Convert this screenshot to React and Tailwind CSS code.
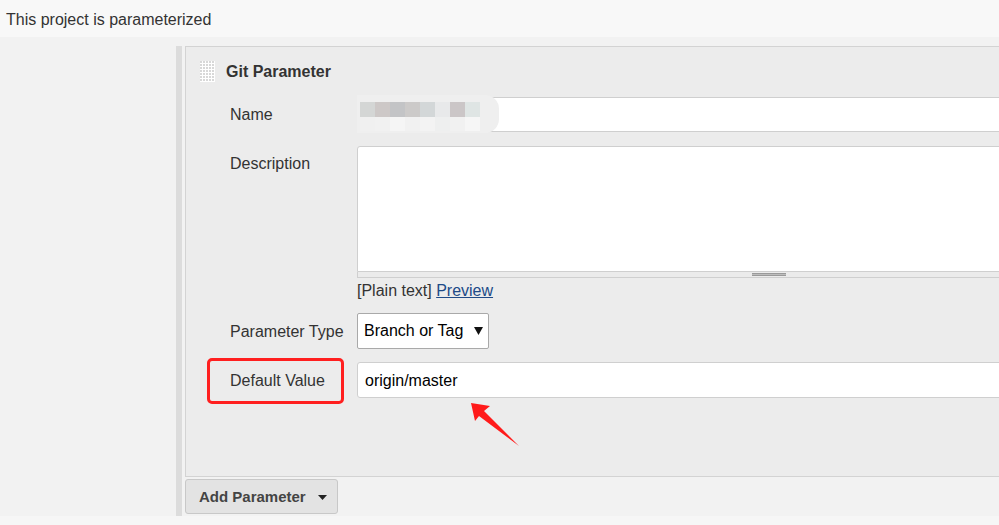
import React from 'react';

const topCells = ['#d4d6d5', '#cdc8c7', '#c3c4c6', '#cccac9', '#d3d7d8', '#e8e9ea', '#cbc6c7', '#dfe5e4'];
const bottomCells = ['#f0f0f0', '#f1f1f1', '#f5f5f5', '#f1f1f1', '#f3f3f3', '#eeefef', '#f1f1f1', '#f6f6f6'];

const Grip = () => (
    <svg width="15" height="21" viewBox="0 0 15 21">
        <defs>
            <pattern id="dots" width="3" height="3" patternUnits="userSpaceOnUse">
                <rect width="3" height="3" fill="#ffffff" />
                <rect width="2" height="2" fill="#d8d8d8" />
            </pattern>
        </defs>
        <rect width="15" height="21" fill="url(#dots)" />
    </svg>
);

const App = () => {
    return (
        <div className="relative min-h-screen overflow-hidden bg-[#f2f2f2] font-['Liberation_Sans',Arial,sans-serif] text-[16px] text-[#333]">
            <div className="h-[37px] bg-[#f8f8f8] pl-[6px] pt-[3px] flex items-center">This project is parameterized</div>

            <div className="pt-[9px] pl-[176px]">
                <div className="border-l-[6px] border-[#dcdcdc] pl-[3px] pb-[2px]">
                    <div className="h-[431px] w-[1100px] border border-r-0 border-[#d3d3d3] bg-[#ececec] pl-[14px] pt-[14px]">
                        {/* header */}
                        <div className="flex items-center h-[21px]">
                            <Grip />
                            <span className="ml-[11px] font-bold">Git Parameter</span>
                        </div>

                        <div className="pl-[30px] mt-[15px]">
                            {/* Name */}
                            <div className="flex items-center h-[35px]">
                                <div className="w-[127px]">Name</div>
                                <div className="relative h-[35px] w-[824px] rounded-[3px] border border-[#cfcfcf] bg-white">
                                    <div className="absolute -left-px -top-[3px] h-[38px] w-[142px] rounded-r-[14px] bg-[#efefef] pt-[7px] pl-[3px]">
                                        <div className="flex">
                                            {topCells.map((c, i) => (
                                                <div key={i} className="h-[15px] w-[15px]" style={{ backgroundColor: c }} />
                                            ))}
                                        </div>
                                        <div className="flex">
                                            {bottomCells.map((c, i) => (
                                                <div key={i} className="h-[14px] w-[15px]" style={{ backgroundColor: c }} />
                                            ))}
                                        </div>
                                    </div>
                                </div>
                            </div>

                            {/* Description */}
                            <div className="flex mt-[14px]">
                                <div className="w-[127px] pt-[6px]">Description</div>
                                <div>
                                    <div className="h-[126px] w-[824px] rounded-t-[3px] border border-[#cfcfcf] bg-white" />
                                    <div className="h-[6px] w-[824px] border border-t-0 border-[#cfcfcf] bg-[#ebebeb] flex justify-center">
                                        <div className="mt-px h-[3px] w-[34px] border-y border-[#9a9a9a] bg-[#bdbdbd]" />
                                    </div>
                                    <div className="mt-[3px] h-[20px] leading-[20px]">
                                        [Plain text] <span className="text-[#204a87] underline">Preview</span>
                                    </div>
                                </div>
                            </div>

                            {/* Parameter Type */}
                            <div className="flex items-center mt-[12px] h-[36px]">
                                <div className="w-[127px] pt-[2px]">Parameter Type</div>
                                <div className="flex h-[36px] w-[132px] items-center rounded-[2px] border border-[#a9a9a9] bg-white pl-[6px] text-black">
                                    <span>Branch or Tag</span>
                                    <svg className="ml-[11px]" width="9" height="8" viewBox="0 0 9 8">
                                        <path d="M0 0 H9 L4.5 8 Z" fill="#111" />
                                    </svg>
                                </div>
                            </div>

                            {/* Default Value */}
                            <div className="flex items-center mt-[13px] h-[36px]">
                                <div className="relative w-[127px] pt-[2px]">
                                    Default Value
                                    <div className="absolute -left-[23px] -top-[9px] h-[46px] w-[137px] rounded-[5px] border-[3px] border-[#ff1f1f]" />
                                </div>
                                <div className="flex h-[36px] w-[824px] items-center rounded-[3px] border border-[#cfcfcf] bg-white pl-[7px] pt-[1px] text-black">
                                    origin/master
                                </div>
                            </div>
                        </div>
                    </div>

                    <button className="mt-[2px] flex h-[35px] w-[153px] items-center rounded-[3px] border border-[#c8c8c8] bg-[#e3e3e3] pl-[13px] pt-[1px] text-[15px] font-bold text-[#444]">
                        Add Parameter
                        <svg className="ml-[12px]" width="9" height="5" viewBox="0 0 9 5">
                            <path d="M0 0 H9 L4.5 5 Z" fill="#222" />
                        </svg>
                    </button>
                </div>
            </div>
            <div className="h-[9px] bg-[#f6f6f6]" />

            {/* annotation arrow */}
            <svg className="absolute left-[466px] top-[398px]" width="56" height="52" viewBox="0 0 56 52">
                <polygon points="5,5 24,8 18,13 53,48 13,18 9,23" fill="#ff1a1a" />
            </svg>
        </div>
    );
};

export default App;
